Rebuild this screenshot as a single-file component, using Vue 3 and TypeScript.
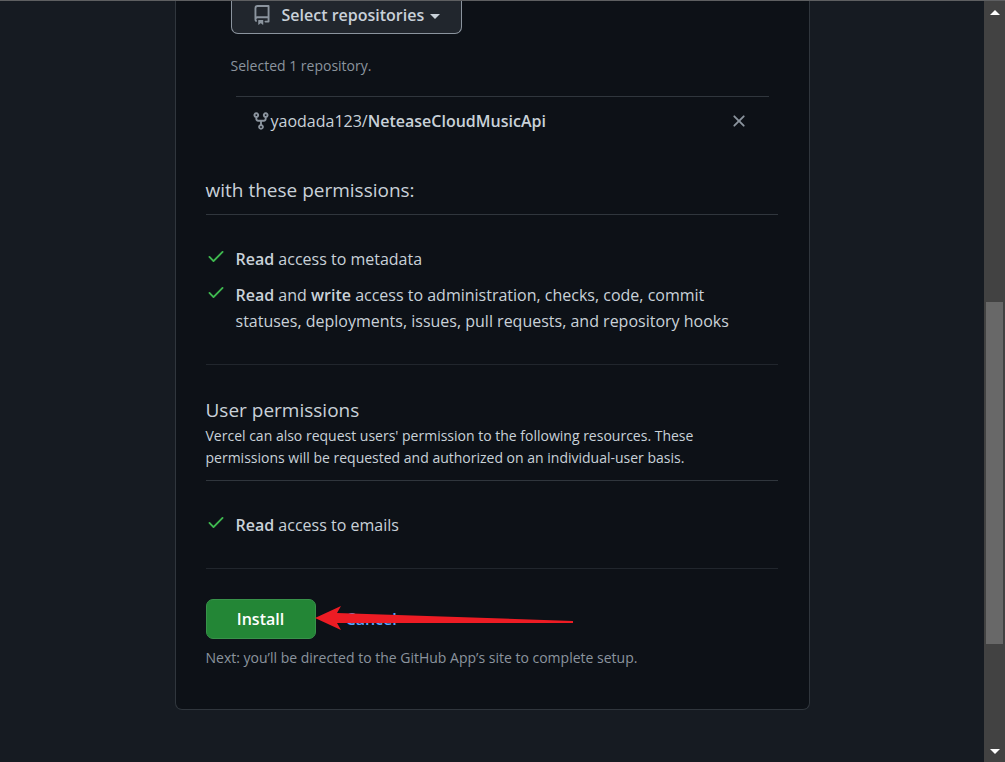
<script setup lang="ts">
import { ref } from 'vue'

interface Part {
  text: string
  strong?: boolean
}

const repositories = ref([{ owner: 'yaodada123', name: 'NeteaseCloudMusicApi' }])

const appPermissions: Part[][] = [
  [{ text: 'Read', strong: true }, { text: ' access to metadata' }],
  [
    { text: 'Read', strong: true },
    { text: ' and ' },
    { text: 'write', strong: true },
    { text: ' access to administration, checks, code, commit statuses, deployments, issues, pull requests, and repository hooks' },
  ],
]

const userPermissions: Part[][] = [
  [{ text: 'Read', strong: true }, { text: ' access to emails' }],
]

function removeRepository(index: number): void {
  repositories.value.splice(index, 1)
}
</script>

<template>
  <div class="window">
    <main class="page">
      <form class="card" @submit.prevent>
        <section class="repositories">
          <button type="button" class="select-button">
            <svg class="repo-icon" viewBox="0 0 16 16" aria-hidden="true">
              <path fill-rule="evenodd" d="M2 2.5A2.5 2.5 0 014.5 0h8.75a.75.75 0 01.75.75v12.5a.75.75 0 01-.75.75h-2.5a.75.75 0 110-1.5h1.75v-2h-8a1 1 0 00-.714 1.7.75.75 0 01-1.072 1.05A2.495 2.495 0 012 11.5v-9zm10.5-1V9h-8c-.356 0-.694.074-1 .208V2.5a1 1 0 011-1h8zM5 12.25v3.25a.25.25 0 00.4.2l1.45-1.087a.25.25 0 01.3 0L8.6 15.7a.25.25 0 00.4-.2v-3.25a.25.25 0 00-.25-.25h-3.5a.25.25 0 00-.25.25z" />
            </svg>
            <span>Select repositories</span>
            <span class="caret" aria-hidden="true"></span>
          </button>
          <p class="note selected">Selected 1 repository.</p>
          <ul class="repo-list">
            <li v-for="(repo, index) in repositories" :key="repo.name" class="repo-row">
              <svg class="fork-icon" viewBox="0 0 16 16" aria-hidden="true">
                <path fill-rule="evenodd" d="M5 3.25a.75.75 0 11-1.5 0 .75.75 0 011.5 0zm0 2.122a2.25 2.25 0 10-1.5 0v.878A2.25 2.25 0 005.75 8.5h1.5v2.128a2.251 2.251 0 101.5 0V8.5h1.5a2.25 2.25 0 002.25-2.25v-.878a2.25 2.25 0 10-1.5 0v.878a.75.75 0 01-.75.75h-4.5A.75.75 0 015 6.25v-.878zm3.75 7.378a.75.75 0 11-1.5 0 .75.75 0 011.5 0zm3-8.75a.75.75 0 100-1.5.75.75 0 000 1.5z" />
              </svg>
              <span>{{ repo.owner }}/<strong>{{ repo.name }}</strong></span>
              <button type="button" class="remove" aria-label="Remove repository" @click="removeRepository(index)">
                <svg viewBox="0 0 16 16" aria-hidden="true">
                  <path fill-rule="evenodd" d="M3.72 3.72a.75.75 0 011.06 0L8 6.94l3.22-3.22a.75.75 0 111.06 1.06L9.06 8l3.22 3.22a.75.75 0 11-1.06 1.06L8 9.06l-3.22 3.22a.75.75 0 01-1.06-1.06L6.94 8 3.72 4.78a.75.75 0 010-1.06z" />
                </svg>
              </button>
            </li>
          </ul>
        </section>

        <h2 class="title">with these permissions:</h2>
        <ul class="permissions">
          <li v-for="(parts, i) in appPermissions" :key="i">
            <svg class="check" viewBox="0 0 16 16" aria-hidden="true">
              <path fill-rule="evenodd" d="M13.78 4.22a.75.75 0 010 1.06l-7.25 7.25a.75.75 0 01-1.06 0L2.22 9.28a.75.75 0 011.06-1.06L6 10.94l6.72-6.72a.75.75 0 011.06 0z" />
            </svg>
            <span><template v-for="(part, j) in parts" :key="j"><strong v-if="part.strong">{{ part.text }}</strong><template v-else>{{ part.text }}</template></template></span>
          </li>
        </ul>

        <h2 class="title">User permissions</h2>
        <p class="description">Vercel can also request users' permission to the following resources. These permissions will be requested and authorized on an individual-user basis.</p>
        <ul class="permissions">
          <li v-for="(parts, i) in userPermissions" :key="i">
            <svg class="check" viewBox="0 0 16 16" aria-hidden="true">
              <path fill-rule="evenodd" d="M13.78 4.22a.75.75 0 010 1.06l-7.25 7.25a.75.75 0 01-1.06 0L2.22 9.28a.75.75 0 011.06-1.06L6 10.94l6.72-6.72a.75.75 0 011.06 0z" />
            </svg>
            <span><template v-for="(part, j) in parts" :key="j"><strong v-if="part.strong">{{ part.text }}</strong><template v-else>{{ part.text }}</template></template></span>
          </li>
        </ul>

        <div class="actions">
          <button type="submit" class="install">Install</button>
          <a href="#" class="cancel">Cancel</a>
          <svg class="pointer" viewBox="0 0 258 26" aria-hidden="true">
            <path d="M0 13 26 1 22 8 258 16V18L22 18 26 25Z" />
          </svg>
        </div>
        <p class="note">Next: you’ll be directed to the GitHub App’s site to complete setup.</p>
      </form>
    </main>

    <div class="scrollbar">
      <button type="button" class="step up" aria-label="Scroll up"></button>
      <div class="track"><div class="thumb"></div></div>
      <button type="button" class="step down" aria-label="Scroll down"></button>
    </div>
  </div>
</template>

<style>
body {
  margin: 0;
  background: #161b22;
}
</style>

<style scoped>
.window {
  box-sizing: border-box;
  display: flex;
  min-height: 100vh;
  border-top: 1px solid #5e5f61;
  background: #161b22;
  color: #c9d1d9;
  font-family: "Open Sans", "Noto Sans", sans-serif;
  font-size: 16px;
  line-height: 26px;
}

.page {
  flex: 1;
  min-width: 0;
  padding: 0 16px 40px;
}

.card {
  box-sizing: border-box;
  max-width: 635px;
  margin: 0 auto;
  padding: 0 31px 40px 30px;
  border: 1px solid #30363d;
  border-top: 0;
  border-radius: 0 0 7px 7px;
  background: #0d1117;
}

h2,
p,
ul {
  margin: 0;
  padding: 0;
  list-style: none;
}

button {
  font: inherit;
  cursor: pointer;
}

strong {
  font-weight: 600;
}

svg {
  flex: none;
  fill: currentColor;
}

.repositories {
  padding-left: 25px;
}

.select-button {
  display: flex;
  align-items: center;
  box-sizing: border-box;
  height: 33px;
  padding: 0 21px 5px 20px;
  border: 1px solid #8b949e;
  border-top: 0;
  border-radius: 0 0 7px 7px;
  background: #21262d;
  color: #c9d1d9;
  font-weight: 600;
}

.repo-icon {
  width: 20px;
  height: 20px;
  margin-right: 10px;
  color: #8b949e;
}

.caret {
  margin: 3px 0 0 6px;
  border: 5px solid transparent;
  border-top-color: currentColor;
  border-bottom: 0;
}

.note {
  color: #8b949e;
  font-size: 14px;
  line-height: 22px;
}

.selected {
  margin-top: 21px;
}

.repo-list {
  margin: 19px 9px 0 5px;
  border-top: 1px solid #30363d;
}

.repo-row {
  display: flex;
  align-items: center;
  padding: 11px 20px 11px 15px;
}

.fork-icon {
  width: 20px;
  height: 20px;
  color: #8b949e;
}

.remove {
  display: flex;
  margin-left: auto;
  padding: 0;
  border: 0;
  background: none;
  color: #8b949e;
}

.remove svg {
  width: 20px;
  height: 20px;
}

.title {
  margin-top: 30px;
  font-size: 19px;
  font-weight: 400;
  line-height: 30px;
}

.description {
  padding-right: 20px;
  font-size: 14px;
  line-height: 22px;
}

.permissions {
  display: grid;
  gap: 10px;
  margin-top: 9px;
  padding: 31px 0 30px;
  border: solid #30363d;
  border-width: 1px 0;
  border-bottom-color: #21262d;
}

.description + .permissions {
  margin-top: 11px;
}

.permissions li {
  display: flex;
  gap: 10px;
  padding-right: 20px;
}

.check {
  width: 20px;
  height: 20px;
  color: #3fb950;
}

.actions {
  position: relative;
  display: flex;
  align-items: center;
  gap: 30px;
  margin: 30px 0 8px;
}

.install {
  box-sizing: border-box;
  width: 110px;
  height: 40px;
  border: 1px solid #38924a;
  border-radius: 7px;
  background: #238636;
  color: #fff;
  font-weight: 600;
}

.cancel {
  color: #58a6ff;
  font-weight: 600;
  text-decoration: none;
}

/* Callout arrow laid over the action row */
.pointer {
  position: absolute;
  top: 6px;
  left: 109px;
  width: 258px;
  height: 26px;
  fill: #ed1c24;
}

.scrollbar {
  display: flex;
  flex-direction: column;
  width: 21px;
  background: #424242;
}

.step {
  display: flex;
  align-items: center;
  justify-content: center;
  height: 22px;
  padding: 0;
  border: 0;
  background: none;
}

.step::before {
  content: "";
  border: 5px solid transparent;
}

.up::before {
  border-top: 0;
  border-bottom-color: #fff;
}

.down::before {
  border-bottom: 0;
  border-top-color: #fff;
}

.track {
  display: flex;
  flex: 1;
  flex-direction: column;
  padding: 0 2px;
}

.track::before {
  content: "";
  flex: 279;
}

.track::after {
  content: "";
  flex: 96;
}

.thumb {
  flex: 342;
  background: #686868;
}
</style>
